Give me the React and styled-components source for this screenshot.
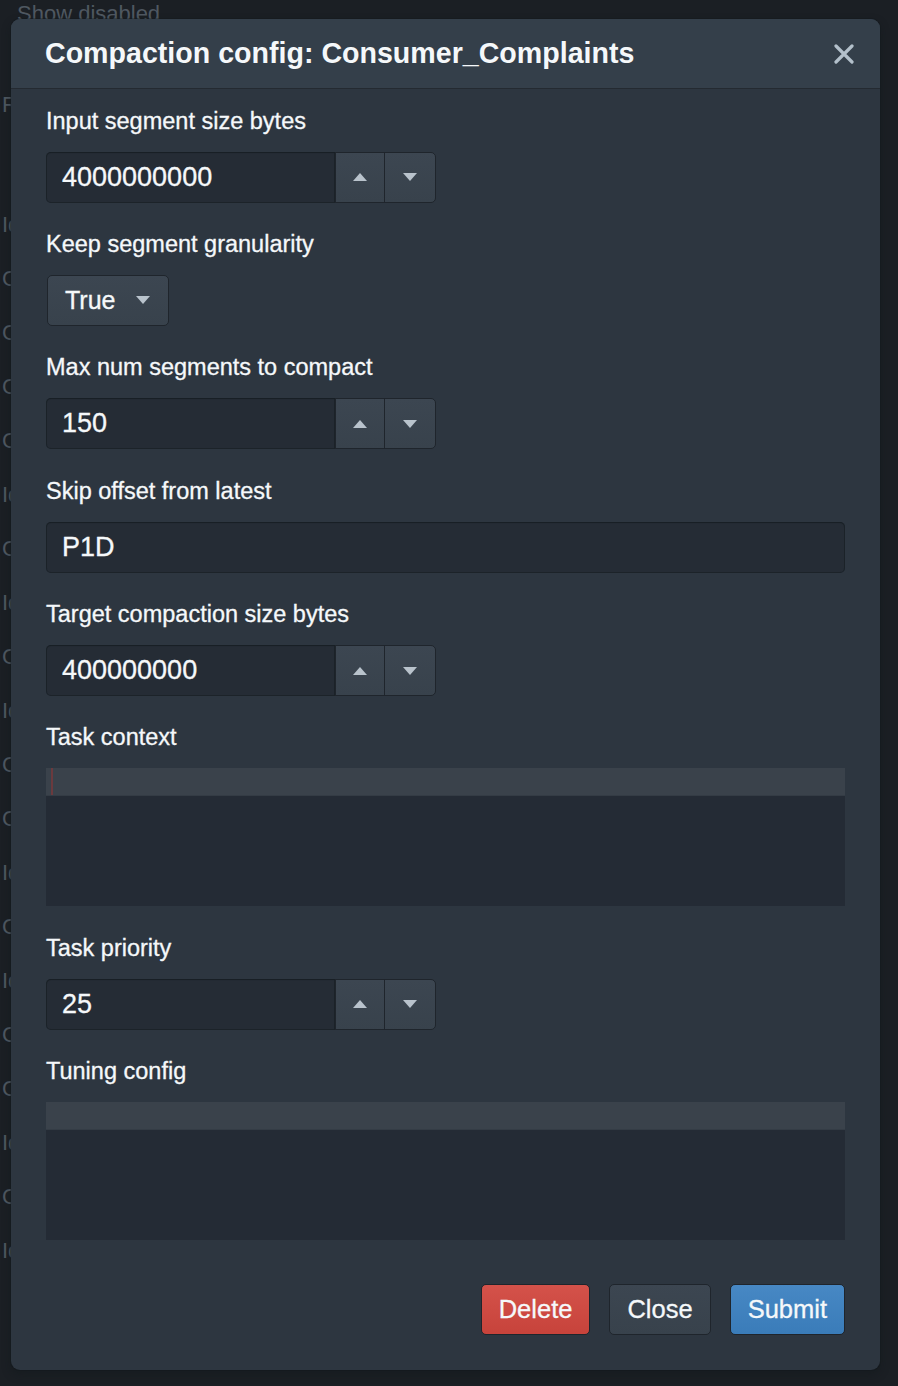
import React from 'react'
import styled, { createGlobalStyle } from 'styled-components'

const GlobalStyle = createGlobalStyle`
  html, body {
    margin: 0;
    padding: 0;
    background: #1b1f24;
  }
  body {
    font-family: "Liberation Sans", Arial, sans-serif;
    -webkit-font-smoothing: antialiased;
  }
`

export const Page = styled.div`
  position: relative;
  width: 898px;
  height: 1386px;
  overflow: hidden;
  background-color: #1b1f24;
`

export const BackList = styled.div`
  display: flex;
  flex-direction: column;
  padding: 0 0 0 2px;
  color: #4f5861;
  font-size: 22px;
`

export const BackTop = styled.div`
  padding-left: 15px;
  line-height: 28px;
`

export const BackHeading = styled.div`
  height: 54px;
  line-height: 54px;
  margin: 50px 0 66px 0;
`

export const BackRow = styled.div`
  height: 54px;
  line-height: 54px;
  white-space: nowrap;
`

export const Dialog = styled.div`
  position: absolute;
  top: 19px;
  left: 11px;
  width: 869px;
  height: 1351px;
  display: flex;
  flex-direction: column;
  background-color: #2d3640;
  border-radius: 9px;
  box-shadow: 0 0 0 1px rgba(16, 22, 26, 0.3), 0 4px 10px rgba(16, 22, 26, 0.4);
  overflow: hidden;
`

export const Header = styled.div`
  display: flex;
  align-items: center;
  justify-content: space-between;
  height: 69px;
  padding: 0 18px 0 34px;
  background-color: #343f4a;
  border-bottom: 1px solid #242a31;
`

export const Title = styled.h4`
  margin: 0;
  color: #f5f8fa;
  font-size: 28.6px;
  font-weight: 700;
`

export const CloseX = styled.button`
  display: flex;
  align-items: center;
  justify-content: center;
  width: 36px;
  height: 36px;
  padding: 0;
  border: none;
  background: transparent;
  cursor: pointer;
`

export const Body = styled.div`
  display: flex;
  flex-direction: column;
  padding: 17.5px 35px 0 35px;
`

export const Group = styled.div`
  display: flex;
  flex-direction: column;
  margin-bottom: 27.4px;
`

export const Label = styled.label`
  color: #f5f8fa;
  font-size: 23.5px;
  line-height: 28px;
  margin-bottom: 17px;
  -webkit-text-stroke: 0.3px #f5f8fa;
`

export const NumericWrap = styled.div`
  display: flex;
  width: 390px;
  height: 51px;
`

export const Input = styled.div`
  display: flex;
  align-items: center;
  box-sizing: border-box;
  flex: ${p => (p.full ? '1 1 auto' : '0 0 289px')};
  height: 51px;
  padding: 0 16px;
  background-color: #252c35;
  color: #f5f8fa;
  font-size: 27px;
  -webkit-text-stroke: 0.3px #f5f8fa;
  border-radius: ${p => (p.full ? '5px' : '5px 0 0 5px')};
  box-shadow: inset 0 0 0 1px rgba(16, 22, 26, 0.4), inset 0 1px 1px rgba(16, 22, 26, 0.3);
`

export const StepButton = styled.button`
  display: flex;
  align-items: center;
  justify-content: center;
  box-sizing: border-box;
  width: ${p => (p.last ? '52px' : '50px')};
  height: 51px;
  padding: 0;
  margin: 0 0 0 ${p => (p.last ? '-1px' : '0')};
  border: 1px solid #1f252c;
  background: linear-gradient(#3c4651, #38424c);
  border-radius: ${p => (p.last ? '0 5px 5px 0' : '0')};
`

export const SelectButton = styled.div`
  display: flex;
  align-items: center;
  justify-content: space-between;
  box-sizing: border-box;
  width: 122px;
  height: 51px;
  margin-left: 1px;
  padding: 0 18px 0 17px;
  background: linear-gradient(#3c4651, #38424c);
  border: 1px solid #1f252c;
  border-radius: 5px;
  color: #f5f8fa;
  font-size: 25px;
  -webkit-text-stroke: 0.3px #f5f8fa;
`

export const Editor = styled.div`
  display: flex;
  flex-direction: column;
  height: 138px;
  background-color: #242b35;
`

export const EditorLine = styled.div`
  position: relative;
  height: 27px;
  background-color: #3a424b;
  border-bottom: 1px solid #343c45;
`

export const Cursor = styled.span`
  position: absolute;
  left: 5px;
  top: 0;
  width: 2px;
  height: 27px;
  background-color: ${p => (p.show ? '#6b3a3e' : 'transparent')};
`

export const Footer = styled.div`
  display: flex;
  justify-content: flex-end;
  gap: 19px;
  padding: 16px 35px 0 35px;
`

const variants = {
  danger: 'linear-gradient(#d4524a, #c7433b)',
  default: 'linear-gradient(#3c4651, #38424c)',
  primary: 'linear-gradient(#4788c4, #3a7cb9)',
}

export const Button = styled.button`
  box-sizing: border-box;
  height: 51px;
  padding: 0 17px;
  font-family: "Liberation Sans", Arial, sans-serif;
  font-size: 25.5px;
  color: #f5f8fa;
  -webkit-text-stroke: 0.3px #f5f8fa;
  background: ${p => variants[p.kind]};
  border: 1px solid #1f252c;
  border-radius: 5px;
  cursor: pointer;
`

const Caret = ({ up }) => (
  <svg width="14" height="8" viewBox="0 0 14 8">
    <path d={up ? 'M0 8 L7 0 L14 8 Z' : 'M0 0 L14 0 L7 8 Z'} fill="#b9c3cc" />
  </svg>
)

const Numeric = ({ value }) => (
  <NumericWrap>
    <Input>{value}</Input>
    <StepButton><Caret up /></StepButton>
    <StepButton last><Caret /></StepButton>
  </NumericWrap>
)

const backRows = ['Id', 'Compaction', 'Compaction', 'Compaction', 'Compaction', 'Id', 'Compaction', 'Id', 'Compaction', 'Id', 'Compaction', 'Compaction', 'Id', 'Compaction', 'Id', 'Compaction', 'Compaction', 'Id', 'Compaction', 'Id']

export default function App() {
  return (
    <Page>
      <GlobalStyle />
      <BackList>
        <BackTop>Show disabled</BackTop>
        <BackHeading>Rows</BackHeading>
        {backRows.map((r, i) => <BackRow key={i}>{r}</BackRow>)}
      </BackList>

      <Dialog>
        <Header>
          <Title>Compaction config: Consumer_Complaints</Title>
          <CloseX aria-label="Close">
            <svg width="20" height="20" viewBox="0 0 20 20">
              <path d="M2 2 L18 18 M18 2 L2 18" stroke="#b3c0cb" strokeWidth="3.2" strokeLinecap="round" />
            </svg>
          </CloseX>
        </Header>

        <Body>
          <Group>
            <Label>Input segment size bytes</Label>
            <Numeric value="4000000000" />
          </Group>
          <Group>
            <Label>Keep segment granularity</Label>
            <SelectButton>
              <span>True</span>
              <Caret />
            </SelectButton>
          </Group>
          <Group>
            <Label>Max num segments to compact</Label>
            <Numeric value="150" />
          </Group>
          <Group>
            <Label>Skip offset from latest</Label>
            <Input full>P1D</Input>
          </Group>
          <Group>
            <Label>Target compaction size bytes</Label>
            <Numeric value="400000000" />
          </Group>
          <Group>
            <Label>Task context</Label>
            <Editor>
              <EditorLine><Cursor show /></EditorLine>
            </Editor>
          </Group>
          <Group>
            <Label>Task priority</Label>
            <Numeric value="25" />
          </Group>
          <Group>
            <Label>Tuning config</Label>
            <Editor>
              <EditorLine><Cursor /></EditorLine>
            </Editor>
          </Group>
        </Body>

        <Footer>
          <Button kind="danger">Delete</Button>
          <Button kind="default">Close</Button>
          <Button kind="primary">Submit</Button>
        </Footer>
      </Dialog>
    </Page>
  )
}
